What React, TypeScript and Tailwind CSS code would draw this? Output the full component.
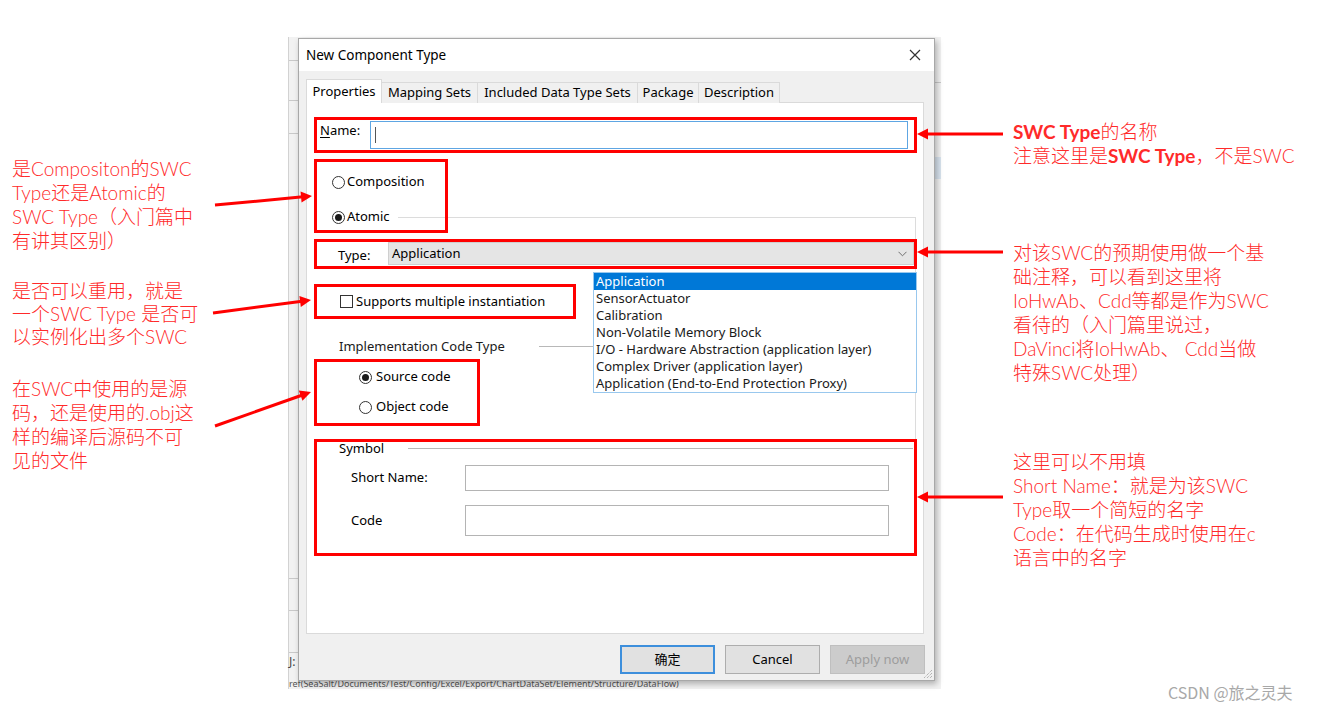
import React from "react";

const RED = "border-[3px] border-[#ff0000]";

function Radio({ checked }: { checked: boolean }) {
  return (
    <span className="w-[13px] h-[13px] rounded-full border border-[#333333] bg-white flex items-center justify-center shrink-0">
      {checked && <span className="w-[7px] h-[7px] rounded-full bg-[#1a1a1a]" />}
    </span>
  );
}

function Arrow({ x1, y1, x2, y2 }: { x1: number; y1: number; x2: number; y2: number }) {
  const dx = x2 - x1;
  const dy = y2 - y1;
  const len = Math.sqrt(dx * dx + dy * dy);
  const ux = dx / len;
  const uy = dy / len;
  const hl = 11;
  const hw = 5.5;
  const bx = x2 - ux * hl;
  const by = y2 - uy * hl;
  const p1 = `${x2},${y2}`;
  const p2 = `${bx - uy * hw},${by + ux * hw}`;
  const p3 = `${bx + uy * hw},${by - ux * hw}`;
  return (
    <g>
      <line x1={x1} y1={y1} x2={bx + ux * 2} y2={by + uy * 2} stroke="#ff0000" strokeWidth={3} />
      <polygon points={`${p1} ${p2} ${p3}`} fill="#ff0000" />
    </g>
  );
}

const NOTE = "text-[19px] text-[#ff2a2a] font-light font-['Lato','Noto_Sans_CJK_SC',sans-serif] whitespace-nowrap";

function LeftNotes() {
  return (
    <div className={`w-[288px] shrink-0 pl-[12px] ${NOTE}`}>
      <div className="mt-[157px] leading-[24px]">
        是Compositon的SWC
        <br />
        Type还是Atomic的
        <br />
        SWC Type（入门篇中
        <br />
        有讲其区别）
      </div>
      <div className="mt-[26px] leading-[23px]">
        是否可以重用，就是
        <br />
        一个SWC Type 是否可
        <br />
        以实例化出多个SWC
      </div>
      <div className="mt-[29px] leading-[24px]">
        在SWC中使用的是源
        <br />
        码，还是使用的.obj这
        <br />
        样的编译后源码不可
        <br />
        见的文件
      </div>
    </div>
  );
}

function RightNotes() {
  return (
    <div className={`flex-1 pl-[72px] ${NOTE}`}>
      <div className="mt-[120px] leading-[24px]">
        <span className="font-bold">SWC Type</span>的名称
        <br />
        注意这里是<span className="font-bold">SWC Type</span>，不是SWC
      </div>
      <div className="mt-[73px] leading-[24px]">
        对该SWC的预期使用做一个基
        <br />
        础注释，可以看到这里将
        <br />
        IoHwAb、Cdd等都是作为SWC
        <br />
        看待的（入门篇里说过，
        <br />
        DaVinci将IoHwAb、 Cdd当做
        <br />
        特殊SWC处理）
      </div>
      <div className="mt-[65px] leading-[24px]">
        这里可以不用填
        <br />
        Short Name：就是为该SWC
        <br />
        Type取一个简短的名字
        <br />
        Code：在代码生成时使用在c
        <br />
        语言中的名字
      </div>
    </div>
  );
}

const typeItems = [
  "Application",
  "SensorActuator",
  "Calibration",
  "Non-Volatile Memory Block",
  "I/O - Hardware Abstraction (application layer)",
  "Complex Driver (application layer)",
  "Application (End-to-End Protection Proxy)",
];

function Panel() {
  return (
    <div className="relative w-[618px] h-[532px] bg-white border border-[#dadada] pl-[7px] pt-[14px] flex flex-col">
      {/* group box lines */}
      <div className="absolute left-[91px] top-[114px] w-[518px] h-px bg-[#dcdcdc]" />
      <div className="absolute left-[608px] top-[114px] w-px h-[224px] bg-[#dcdcdc]" />
      <div className="absolute left-[232px] top-[243px] w-[376px] h-px bg-[#b8b8b8]" />

      {/* Name */}
      <div className={`${RED} w-[603px] h-[36px] flex items-center pl-[3px]`}>
        <div className="w-[50px] self-start mt-[1px] leading-[18px]">
          <span className="underline underline-offset-2">N</span>ame:
        </div>
        <div className="w-[538px] h-[28px] border border-[#5ea6e3] bg-white flex items-center pl-[4px]">
          <span className="w-px h-[16px] bg-[#555555]" />
        </div>
      </div>

      {/* Composition / Atomic */}
      <div className={`${RED} w-[134px] h-[74px] mt-[6px] pl-[15px] pt-[10px] flex flex-col gap-[15px] relative z-10`}>
        <div className="h-[20px] flex items-center gap-[2px]">
          <Radio checked={false} />
          <span>Composition</span>
        </div>
        <div className="h-[20px] flex items-center gap-[2px]">
          <Radio checked={true} />
          <span className="bg-white pr-[6px]">Atomic</span>
        </div>
      </div>

      {/* Type */}
      <div className={`${RED} w-[603px] h-[30px] mt-[6px] flex pl-[21px] relative z-10`}>
        <div className="w-[50px] pt-[4px] leading-[18px]">Type:</div>
        <div className="w-[526px] h-[23px] bg-[#e5e5e5] border border-[#cfcfcf] flex items-center justify-between pl-[3px] pr-[6px]">
          <span>Application</span>
          <svg width="9" height="6" viewBox="0 0 9 6">
            <path d="M0.5 0.8 L4.5 4.8 L8.5 0.8" fill="none" stroke="#707070" strokeWidth="1" />
          </svg>
        </div>
      </div>

      {/* Supports multiple instantiation */}
      <div className={`${RED} w-[262px] h-[35px] mt-[15px] flex items-center pl-[23px] gap-[3px]`}>
        <span className="w-[13px] h-[13px] border border-[#333333] bg-white shrink-0" />
        <span>Supports multiple instantiation</span>
      </div>

      {/* Implementation Code Type */}
      <div className="mt-[18px] h-[18px] leading-[18px] pl-[25px] text-[#1a1a1a]">Implementation Code Type</div>

      {/* Source / Object */}
      <div className={`${RED} w-[166px] h-[67px] mt-[4px] pl-[42px] pt-[5px] flex flex-col gap-[10px]`}>
        <div className="h-[20px] flex items-center gap-[4px]">
          <Radio checked={true} />
          <span>Source code</span>
        </div>
        <div className="h-[20px] flex items-center gap-[4px]">
          <Radio checked={false} />
          <span>Object code</span>
        </div>
      </div>

      {/* Symbol */}
      <div className={`${RED} w-[603px] h-[117px] mt-[13px] flex flex-col bg-white relative z-10`}>
        <div className="h-[14px] -mt-[1px] flex items-center pl-[22px]">
          <span className="leading-[14px]">Symbol</span>
          <span className="flex-1 h-px bg-[#b8b8b8] ml-[24px] mr-[1px]" />
        </div>
        <div className="mt-[10px] h-[26px] flex items-center pl-[34px]">
          <span className="w-[114px]">Short Name:</span>
          <span className="w-[424px] h-[26px] border border-[#b4b4b4] bg-white" />
        </div>
        <div className="mt-[14px] h-[31px] flex items-center pl-[34px]">
          <span className="w-[114px]">Code</span>
          <span className="w-[424px] h-[31px] border border-[#b4b4b4] bg-white" />
        </div>
      </div>

      {/* Dropdown list */}
      <div className="absolute left-[286px] top-[169px] w-[324px] border border-[#99c8ee] bg-white z-20 leading-[17px]">
        {typeItems.map((t, i) => (
          <div
            key={i}
            className={i === 0 ? "h-[17px] pl-[2px] bg-[#0078d7] text-white" : "h-[17px] pl-[2px] text-[#1a1a1a]"}
          >
            {t}
          </div>
        ))}
      </div>
    </div>
  );
}

function Dialog() {
  const tabs = ["Mapping Sets", "Included Data Type Sets", "Package", "Description"];
  const widths = ["w-[97px]", "w-[161px]", "w-[62px]", "w-[82px]"];
  return (
    <div className="relative ml-[9px] mt-[1px] w-[637px] h-[643px] bg-[#f0f0f0] border border-[#a8a8a8] shadow-[2px_3px_6px_rgba(0,0,0,0.28)] flex flex-col text-[13px] text-black font-['Noto_Sans','Noto_Sans_CJK_SC',sans-serif]">
      <div className="h-[32px] bg-white flex items-center justify-between pl-[7px] pr-[13px] shrink-0">
        <span className="text-[13.5px]">New Component Type</span>
        <svg width="12" height="12" viewBox="0 0 12 12">
          <path d="M1 1 L11 11 M11 1 L1 11" stroke="#333333" strokeWidth="1.2" />
        </svg>
      </div>
      <div className="pl-[7px] pt-[8px] flex flex-col">
        <div className="flex items-end h-[24px] relative z-10 -mb-px">
          <div className="w-[76px] h-[24px] bg-white border border-b-0 border-[#dadada] flex items-center justify-center">
            Properties
          </div>
          {tabs.map((t, i) => (
            <div
              key={t}
              className={`${widths[i]} h-[21px] bg-[#f0f0f0] border border-b-0 border-[#dadada] -ml-px first:ml-px flex items-center justify-center`}
            >
              {t}
            </div>
          ))}
        </div>
        <Panel />
        <div className="flex justify-end gap-[10px] mt-[11px] pr-[9px]">
          <div className="w-[95px] h-[29px] bg-[#e1e1e1] border-2 border-[#3d8fdc] flex items-center justify-center">
            确定
          </div>
          <div className="w-[95px] h-[29px] bg-[#e1e1e1] border border-[#adadad] flex items-center justify-center">
            Cancel
          </div>
          <div className="w-[95px] h-[29px] bg-[#cccccc] border border-[#bfbfbf] text-[#9d9d9d] flex items-center justify-center">
            Apply now
          </div>
        </div>
      </div>
      <svg className="absolute right-[1px] bottom-[1px]" width="11" height="11" viewBox="0 0 11 11">
        <path d="M10 2 L2 10 M10 5 L5 10 M10 8 L8 10" stroke="#9a9a9a" strokeWidth="1" strokeDasharray="1 1" />
      </svg>
    </div>
  );
}

function Window() {
  const lines = ["top-[23px]", "top-[63px]", "top-[96px]", "top-[541px]", "top-[573px]", "top-[615px]"];
  return (
    <div className="relative w-[653px] h-[652px] mt-[37px] shrink-0 bg-[#f2f2f2] border-l border-[#d2d2d2]">
      {lines.map((l) => (
        <div key={l} className={`absolute left-0 ${l} w-[9px] h-px bg-[#c9c9c9]`} />
      ))}
      <div className="absolute right-0 top-[120px] w-[7px] h-[22px] bg-[#d8e3ee]" />
      <div className="absolute right-0 top-[45px] w-[7px] h-px bg-[#c9c9c9]" />
      <div className="absolute left-0 top-[616px] text-[12px] text-[#444444] font-['Noto_Sans',sans-serif]">J:</div>
      <div className="absolute left-0 top-[641px] text-[9px] leading-[11px] text-[#555555] whitespace-nowrap font-['Noto_Sans',sans-serif]">
        ref(SeaSalt/Documents/Test/Config/Excel/Export/ChartDataSet/Element/Structure/DataFlow)
      </div>
      <Dialog />
    </div>
  );
}

export default function App() {
  return (
    <div className="relative w-[1319px] h-[711px] bg-white overflow-hidden flex">
      <LeftNotes />
      <Window />
      <RightNotes />
      <svg className="absolute inset-0 pointer-events-none" width="1319" height="711">
        <Arrow x1={1003} y1={134} x2={917} y2={134} />
        <Arrow x1={1003} y1={252} x2={917} y2={252} />
        <Arrow x1={1003} y1={497} x2={917} y2={497} />
        <Arrow x1={215} y1={205} x2={312} y2={196} />
        <Arrow x1={213} y1={313} x2={311} y2={300} />
        <Arrow x1={215} y1={426} x2={311} y2={392} />
      </svg>
      <div className="absolute left-[1168px] top-[681px] text-[16px] leading-[22px] text-[#a8a8a8] font-['Noto_Sans_CJK_SC',sans-serif] whitespace-nowrap">
        CSDN @旅之灵夫
      </div>
    </div>
  );
}
